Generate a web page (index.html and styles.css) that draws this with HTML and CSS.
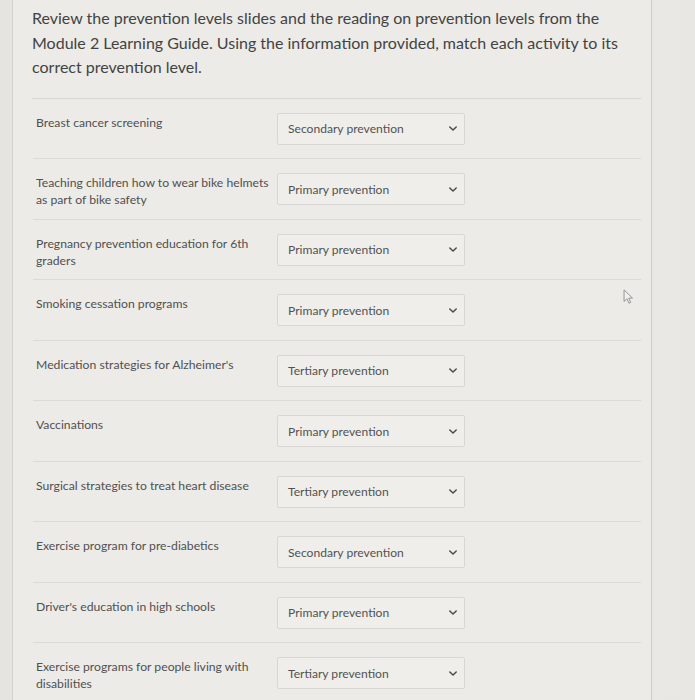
FILE: index.html
```html
<!DOCTYPE html>
<html>
<head>
<meta charset="utf-8">
<link rel="stylesheet" href="styles.css">
</head>
<body>
<div class="page">
  <div class="card">
    <div class="question"><p>Review the prevention levels slides and the reading on prevention levels from the Module 2 Learning Guide. Using the information provided, match each activity to its correct prevention level.</p></div>
    <div class="rows">
      <div class="row"><div class="label">Breast cancer screening</div><div class="select"><span>Secondary prevention</span><svg class="chev" viewBox="0 0 10 6"><path d="M1 1l4 4 4-4"/></svg></div></div>
      <div class="row"><div class="label">Teaching children how to wear bike helmets as part of bike safety</div><div class="select"><span>Primary prevention</span><svg class="chev" viewBox="0 0 10 6"><path d="M1 1l4 4 4-4"/></svg></div></div>
      <div class="row"><div class="label">Pregnancy prevention education for 6th graders</div><div class="select"><span>Primary prevention</span><svg class="chev" viewBox="0 0 10 6"><path d="M1 1l4 4 4-4"/></svg></div></div>
      <div class="row"><div class="label">Smoking cessation programs</div><div class="select"><span>Primary prevention</span><svg class="chev" viewBox="0 0 10 6"><path d="M1 1l4 4 4-4"/></svg></div></div>
      <div class="row"><div class="label">Medication strategies for Alzheimer's</div><div class="select"><span>Tertiary prevention</span><svg class="chev" viewBox="0 0 10 6"><path d="M1 1l4 4 4-4"/></svg></div></div>
      <div class="row"><div class="label">Vaccinations</div><div class="select"><span>Primary prevention</span><svg class="chev" viewBox="0 0 10 6"><path d="M1 1l4 4 4-4"/></svg></div></div>
      <div class="row"><div class="label">Surgical strategies to treat heart disease</div><div class="select"><span>Tertiary prevention</span><svg class="chev" viewBox="0 0 10 6"><path d="M1 1l4 4 4-4"/></svg></div></div>
      <div class="row"><div class="label">Exercise program for pre-diabetics</div><div class="select"><span>Secondary prevention</span><svg class="chev" viewBox="0 0 10 6"><path d="M1 1l4 4 4-4"/></svg></div></div>
      <div class="row"><div class="label">Driver's education in high schools</div><div class="select"><span>Primary prevention</span><svg class="chev" viewBox="0 0 10 6"><path d="M1 1l4 4 4-4"/></svg></div></div>
      <div class="row"><div class="label">Exercise programs for people living with disabilities</div><div class="select"><span>Tertiary prevention</span><svg class="chev" viewBox="0 0 10 6"><path d="M1 1l4 4 4-4"/></svg></div></div>
    </div>
    <svg class="cursor" viewBox="0 0 12 18"><path d="M1 1v13l3.2-3 2.3 5 2-1-2.3-4.8H10.5z"/></svg>
  </div>
</div>
</body>
</html>
```

FILE: styles.css
```css
html, body {
  margin: 0;
  padding: 0;
  background: #e8e6e2;
}
body {
  font-family: Lato, "Open Sans", sans-serif;
  color: #4a4a4a;
}
.page {
  width: 695px;
  height: 700px;
  overflow: hidden;
  background: linear-gradient(90deg, #e6e4e0 0%, #ebe9e5 50%, #e9e7e3 100%);
}
.card {
  position: relative;
  margin-left: 12px;
  width: 638px;
  min-height: 700px;
  border-left: 1px solid #d3d1cd;
  border-right: 1px solid #cfcdc9;
  background: #ecebe7;
}
.question {
  padding: 0 10px 0 19px;
}
.question p {
  margin: 0;
  padding: 6px 12px 18px 0;
  font-size: 16px;
  line-height: 24.5px;
  color: #434343;
  border-bottom: 1px solid #d9d7d3;
}
.rows {
  padding: 0 10px 0 20px;
}
.row {
  display: flex;
  align-items: flex-start;
  height: 60.5px;
  box-sizing: border-box;
  padding-top: 13px;
  border-bottom: 1px solid #dcdad6;
}
.row:last-child {
  border-bottom: none;
}
.label {
  width: 242px;
  box-sizing: border-box;
  padding: 2px 0 0 3px;
  font-size: 12.2px;
  line-height: 17px;
  color: #505050;
}
.select {
  margin-left: 2px;
  margin-top: 1px;
  width: 188px;
  height: 32px;
  box-sizing: border-box;
  display: flex;
  align-items: center;
  justify-content: space-between;
  padding: 0 7px 0 10px;
  border: 1px solid #d9d7d3;
  border-radius: 2px;
  background: #efeeea;
  font-size: 12.1px;
  color: #525252;
}
.chev {
  width: 8px;
  height: 5px;
  fill: none;
  stroke: #4a4a4a;
  stroke-width: 1.8;
  stroke-linecap: round;
  stroke-linejoin: round;
}
.cursor {
  position: absolute;
  left: 610px;
  top: 289px;
  width: 11px;
  height: 16px;
  fill: #f2f1ee;
  stroke: #8a8a8a;
  stroke-width: 1;
}
```
